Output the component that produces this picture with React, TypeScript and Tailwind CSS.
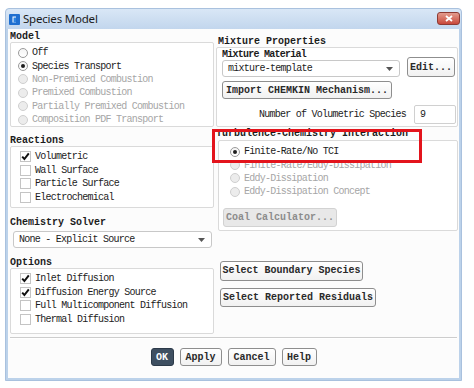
import React from 'react';

const mono = "font-['Liberation_Mono',monospace]";
const txt = `${mono} text-[10px] tracking-[-0.75px] text-[#1c1c1c] whitespace-nowrap`;
const head = `${mono} text-[10px] font-bold text-[#1c1c1c] whitespace-nowrap leading-[11px] h-[11px]`;
const btn = `${mono} text-[10px] font-bold text-[#2a2a2a] whitespace-nowrap flex items-center justify-center rounded-[3px] border border-[#8e8e8e] bg-gradient-to-b from-[#ffffff] to-[#f1f1f1]`;

function Radio({ label, checked = false, disabled = false }: { label: string; checked?: boolean; disabled?: boolean }) {
  return (
    <div className="flex items-center h-[13.4px]">
      <span
        className={`w-[10px] h-[10px] rounded-full border flex items-center justify-center ${
          disabled ? 'border-[#cfcfcf] bg-[#ececec]' : 'border-[#9a9a9a] bg-gradient-to-b from-[#f4f4f4] to-[#ffffff]'
        }`}
      >
        {checked && <span className="w-[4px] h-[4px] rounded-full bg-[#1e1e1e]" />}
      </span>
      <span className={`${txt} ml-[4px] ${disabled ? 'text-[#a6a6a6]' : ''}`}>{label}</span>
    </div>
  );
}

function Check({ label, checked = false }: { label: string; checked?: boolean }) {
  return (
    <div className="flex items-center h-[13.5px]">
      <span className="w-[11px] h-[11px] border border-[#c4c4c4] bg-white flex items-center justify-center">
        {checked && (
          <svg width="9" height="9" viewBox="0 0 9 9">
            <path d="M1.2 4.6 L3.4 7 L7.8 1.4" stroke="#111" strokeWidth="2" fill="none" />
          </svg>
        )}
      </span>
      <span className={`${txt} ml-[4px]`}>{label}</span>
    </div>
  );
}

function Dropdown({ value, className }: { value: string; className: string }) {
  return (
    <div className={`flex items-center justify-between rounded-[3px] border border-[#c8c8c8] bg-white pl-[5px] pr-[6px] ${className}`}>
      <span className={txt}>{value}</span>
      <svg width="7" height="4" viewBox="0 0 7 4">
        <path d="M0 0 H7 L3.5 4 Z" fill="#555" />
      </svg>
    </div>
  );
}

export default function App() {
  return (
    <div className="w-[474px] h-[388px] bg-white pl-[5px] pt-[8px]">
      <div className="w-[457px] h-[373px] flex flex-col bg-[#bcd2ea] rounded-t-[4px] border border-[#a9c1de]">
        {/* Title bar */}
        <div className="h-[20px] flex items-center bg-gradient-to-b from-[#d9e7f6] to-[#c2d6ed] rounded-t-[4px] relative">
          <svg width="11" height="11" viewBox="0 0 11 11" className="ml-[3px]">
            <rect width="11" height="11" rx="1" fill="#1f6fd0" />
            <path d="M3.5 2.5 H7 V8.5 H3.5 Z" fill="#fff" />
            <path d="M4.5 3.5 H7 V8.5 H4.5 Z" fill="#2d83e0" />
          </svg>
          <span className="ml-[3px] font-['Noto_Sans',sans-serif] text-[11.5px] text-[#1b1b1b] tracking-[-0.2px]">Species Model</span>
          <div className="absolute right-[1px] top-[3px] w-[23px] h-[13px] rounded-[3px] border border-[#8d3a33] bg-gradient-to-b from-[#e29b8e] to-[#c8463a] flex items-center justify-center">
            <svg width="8" height="7" viewBox="0 0 8 7">
              <path d="M1 1 L7 6 M7 1 L1 6" stroke="#fff" strokeWidth="1.8" />
            </svg>
          </div>
        </div>

        {/* Content */}
        <div className="mx-[2px] h-[349px] bg-[#fcfcfc] flex flex-col pt-[2px]">
          <div className="flex pl-[2px]">
            {/* Left column */}
            <div className="w-[204px] flex flex-col">
              <div className={head}>Model</div>
              <div className="h-[85px] border border-[#dadada] rounded-[2px] bg-white pt-[3px] pl-[7px]">
                <Radio label="Off" />
                <Radio label="Species Transport" checked />
                <Radio label="Non-Premixed Combustion" disabled />
                <Radio label="Premixed Combustion" disabled />
                <Radio label="Partially Premixed Combustion" disabled />
                <Radio label="Composition PDF Transport" disabled />
              </div>

              <div className={`${head} mt-[8px]`}>Reactions</div>
              <div className="h-[62px] border border-[#dadada] rounded-[2px] bg-white pt-[3px] pl-[9px]">
                <Check label="Volumetric" checked />
                <Check label="Wall Surface" />
                <Check label="Particle Surface" />
                <Check label="Electrochemical" />
              </div>

              <div className={`${head} mt-[9px]`}>Chemistry Solver</div>
              <Dropdown value="None - Explicit Source" className="mt-[3px] ml-[3px] w-[199px] h-[17px]" />

              <div className={`${head} mt-[9px]`}>Options</div>
              <div className="h-[66px] border border-[#dadada] rounded-[2px] bg-white pt-[3px] pl-[9px]">
                <Check label="Inlet Diffusion" checked />
                <Check label="Diffusion Energy Source" checked />
                <Check label="Full Multicomponent Diffusion" />
                <Check label="Thermal Diffusion" />
              </div>
            </div>

            {/* Right column */}
            <div className="w-[242px] ml-[2px] flex flex-col pt-[5px]">
              <div className={`${head} ml-[2px]`}>Mixture Properties</div>
              <div className="border border-[#dadada] rounded-[2px] bg-white pl-[5px] pr-[1px] pb-[2px]">
                <div className={`${txt} font-bold mt-[1px] h-[11px] leading-[11px]`}>Mixture Material</div>
                <div className="flex items-end h-[20px] mt-[-3px]">
                  <Dropdown value="mixture-template" className="w-[178px] h-[17px]" />
                  <div className={`${btn} ml-[7px] w-[48px] h-[20px]`}>Edit...</div>
                </div>
                <div className={`${btn} mt-[4px] w-[170px] h-[18px]`}>Import CHEMKIN Mechanism...</div>
                <div className="flex items-center justify-end mt-[6px] h-[19px]">
                  <span className={txt}>Number of Volumetric Species</span>
                  <div className={`${txt} ml-[8px] w-[42px] h-[19px] border border-[#d0d0d0] rounded-[2px] bg-white flex items-center pl-[5px]`}>9</div>
                </div>
              </div>

              <div className="relative mt-[1px]">
                <div className={head}>Turbulence-Chemistry Interaction</div>
                <div className="ml-[2px] mt-[1px] border border-[#dadada] rounded-[2px] bg-white pt-[4px] pl-[11px] pb-[3px]">
                  <Radio label="Finite-Rate/No TCI" checked />
                  <Radio label="Finite-Rate/Eddy-Dissipation" disabled />
                  <Radio label="Eddy-Dissipation" disabled />
                  <Radio label="Eddy-Dissipation Concept" disabled />
                  <div className={`${mono} text-[10px] font-bold text-[#8c8c8c] whitespace-nowrap flex items-center justify-center rounded-[3px] border border-[#d2d2d2] bg-[#e8e8e8] mt-[9px] ml-[-7px] w-[114px] h-[19px]`}>
                    Coal Calculator...
                  </div>
                </div>
                <div className="absolute left-[-4px] top-[1px] w-[210px] h-[34px] border-[3px] border-[#e3141c]" />
              </div>

              <div className={`${btn} mt-[30px] ml-[4px] w-[143px] h-[20px]`}>Select Boundary Species</div>
              <div className={`${btn} mt-[7px] ml-[4px] w-[156px] h-[19px]`}>Select Reported Residuals</div>
            </div>
          </div>

          <div className="mt-[3px] mx-[2px] h-[2px] border-t border-[#cdcdcd] border-b border-b-white" />

          <div className="mt-[9px] flex justify-center gap-[6px]">
            <div className={`${mono} text-[10px] font-bold text-white flex items-center justify-center rounded-[3px] bg-[#3e4f61] border border-[#2c3a49] w-[23px] h-[18px]`}>OK</div>
            <div className={`${btn} w-[42px] h-[18px]`}>Apply</div>
            <div className={`${btn} w-[48px] h-[18px]`}>Cancel</div>
            <div className={`${btn} w-[35px] h-[18px]`}>Help</div>
          </div>
        </div>
      </div>
    </div>
  );
}
